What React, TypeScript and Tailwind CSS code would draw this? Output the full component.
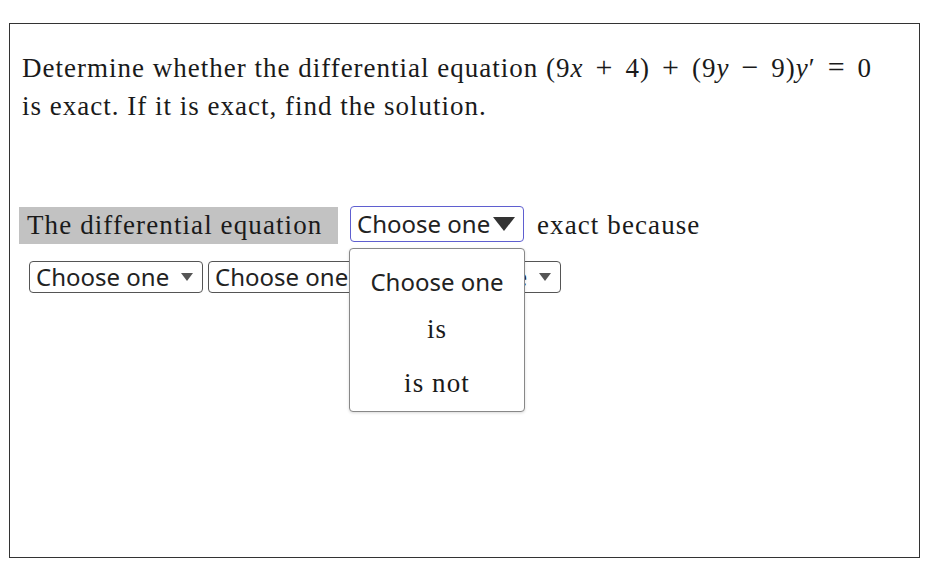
import React from "react";

const SERIF = "font-['Liberation_Serif','DejaVu_Serif',serif]";

function Op({ children }: { children: React.ReactNode }) {
  return <span className="mx-[12px] text-[30px] leading-none">{children}</span>;
}

function SmallSelect() {
  return (
    <div className="flex h-[32px] w-[174px] items-center justify-between rounded-[4px] border border-[#555] bg-white pl-[6px] pr-[9px] font-['Noto_Sans','Open_Sans',sans-serif] text-[24px] leading-none text-[#222]">
      <span>Choose one</span>
      <svg width="12" height="8" viewBox="0 0 12 8">
        <path d="M0 0 L12 0 L6 8 Z" fill="#555" />
      </svg>
    </div>
  );
}

export default function App() {
  return (
    <div className="h-[563px] w-[945px] bg-white pl-[9px] pt-[23px]">
      <div className="relative h-[535px] w-[911px] border border-[#333] bg-white">
        <p
          className={`pl-[12px] pr-[34px] pt-[25px] text-[27px] leading-[38px] tracking-[1px] text-[#1a1a1a] ${SERIF}`}
        >
          Determine whether the differential equation{" "}
          <span className="whitespace-nowrap">
            (9<i>x</i>
            <Op>+</Op>4)<Op>+</Op>(9<i>y</i>
            <Op>−</Op>9)<i>y</i>′<Op>=</Op>0
          </span>{" "}
          is exact. If it is exact, find the solution.
        </p>

        <div className="mt-[82px] flex items-start pl-[9px]">
          <div
            className={`flex h-[37px] w-[319px] items-center bg-[#c2c2c2] pl-[8px] text-[27px] tracking-[1.1px] text-[#1a1a1a] ${SERIF}`}
          >
            The differential equation
          </div>
          <div className="ml-[12px] mt-[-1px] flex h-[36px] w-[174px] items-center rounded-[4px] border-[1.5px] border-[#5f5fd0] bg-white pl-[6px] font-['Noto_Sans','Open_Sans',sans-serif] text-[24px] leading-none text-[#222]">
            <span>Choose one</span>
            <svg className="ml-[3px]" width="22" height="14" viewBox="0 0 22 14">
              <path d="M0 0 L22 0 L11 14 Z" fill="#333" />
            </svg>
          </div>
          <div
            className={`ml-[13px] flex h-[37px] items-center text-[27px] tracking-[1.1px] text-[#1a1a1a] ${SERIF}`}
          >
            exact because
          </div>
        </div>

        <div className="mt-[17px] flex gap-[5px] pl-[19px]">
          <SmallSelect />
          <SmallSelect />
          <SmallSelect />
        </div>

        <div className="absolute left-[339px] top-[224px] flex h-[164px] w-[176px] flex-col items-center rounded-[4px] border border-[#888] bg-white shadow-[0_1px_3px_rgba(0,0,0,0.15)]">
          <div className="mt-[21px] font-['Noto_Sans','Open_Sans',sans-serif] text-[24px] leading-none text-[#222]">
            Choose one
          </div>
          <div className={`mt-[22px] text-[27px] leading-none tracking-[1.1px] text-[#1a1a1a] ${SERIF}`}>
            is
          </div>
          <div className={`mt-[27px] text-[27px] leading-none tracking-[1.1px] text-[#1a1a1a] ${SERIF}`}>
            is not
          </div>
        </div>
      </div>
    </div>
  );
}
